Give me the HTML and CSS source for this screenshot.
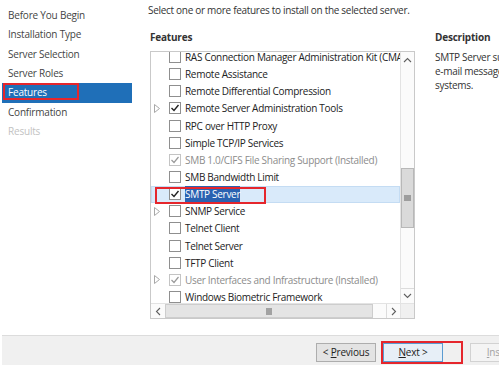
FILE: index.html
```html
<!DOCTYPE html>
<html>
<head>
<meta charset="utf-8">
<link rel="stylesheet" href="styles.css">
</head>
<body>
<div class="page">
  <div class="main">
    <nav class="nav">
      <div class="nav-item">Before You Begin</div>
      <div class="nav-item">Installation Type</div>
      <div class="nav-item">Server Selection</div>
      <div class="nav-item">Server Roles</div>
      <div class="nav-item active">Features<span class="redbox nav-red"></span></div>
      <div class="nav-item">Confirmation</div>
      <div class="nav-item disabled">Results</div>
    </nav>
    <section class="content">
      <div class="intro">Select one or more features to install on the selected server.</div>
      <div class="columns">
        <div class="features-col">
          <div class="col-title">Features</div>
          <div class="listbox">
            <div class="viewport">
              <div class="rows">
                <div class="row"><span class="exp"></span><span class="cb"></span><span class="label">RAS Connection Manager Administration Kit (CMAK)</span></div>
                <div class="row"><span class="exp"></span><span class="cb"></span><span class="label">Remote Assistance</span></div>
                <div class="row"><span class="exp"></span><span class="cb"></span><span class="label">Remote Differential Compression</span></div>
                <div class="row"><span class="exp"><svg width="6" height="9" viewBox="0 0 6 9"><path d="M0.5 0.5 L5.5 4.5 L0.5 8.5 Z" fill="none" stroke="#a8a8a8" stroke-width="1"/></svg></span><span class="cb"><svg class="check" width="10" height="10" viewBox="0 0 10 10"><path d="M1.5 5 L4 7.5 L8.5 2" fill="none" stroke="#222" stroke-width="1.4"/></svg></span><span class="label">Remote Server Administration Tools</span></div>
                <div class="row"><span class="exp"></span><span class="cb"></span><span class="label">RPC over HTTP Proxy</span></div>
                <div class="row"><span class="exp"></span><span class="cb"></span><span class="label">Simple TCP/IP Services</span></div>
                <div class="row installed"><span class="exp"></span><span class="cb"><svg class="check" width="10" height="10" viewBox="0 0 10 10"><path d="M1.5 5 L4 7.5 L8.5 2" fill="none" stroke="#9a9a9a" stroke-width="1.2"/></svg></span><span class="label">SMB 1.0/CIFS File Sharing Support (Installed)</span></div>
                <div class="row"><span class="exp"></span><span class="cb"></span><span class="label">SMB Bandwidth Limit</span></div>
                <div class="row selected"><span class="exp"></span><span class="cb"><svg class="check" width="10" height="10" viewBox="0 0 10 10"><path d="M1.5 5 L4 7.5 L8.5 2" fill="none" stroke="#222" stroke-width="1.4"/></svg></span><span class="label"><span class="sel-text">SMTP Server</span></span><span class="redbox row-red"></span></div>
                <div class="row"><span class="exp"><svg width="6" height="9" viewBox="0 0 6 9"><path d="M0.5 0.5 L5.5 4.5 L0.5 8.5 Z" fill="none" stroke="#a8a8a8" stroke-width="1"/></svg></span><span class="cb"></span><span class="label">SNMP Service</span></div>
                <div class="row"><span class="exp"></span><span class="cb"></span><span class="label">Telnet Client</span></div>
                <div class="row"><span class="exp"></span><span class="cb"></span><span class="label">Telnet Server</span></div>
                <div class="row"><span class="exp"></span><span class="cb"></span><span class="label">TFTP Client</span></div>
                <div class="row installed"><span class="exp"><svg width="6" height="9" viewBox="0 0 6 9"><path d="M0.5 0.5 L5.5 4.5 L0.5 8.5 Z" fill="none" stroke="#a8a8a8" stroke-width="1"/></svg></span><span class="cb"><svg class="check" width="10" height="10" viewBox="0 0 10 10"><path d="M1.5 5 L4 7.5 L8.5 2" fill="none" stroke="#9a9a9a" stroke-width="1.2"/></svg></span><span class="label">User Interfaces and Infrastructure (Installed)</span></div>
                <div class="row"><span class="exp"></span><span class="cb"></span><span class="label">Windows Biometric Framework</span></div>
                <div class="row"><span class="exp"></span><span class="cb"></span><span class="label">Windows Identity Foundation 3.5</span></div>
              </div>
            </div>
            <div class="vscroll">
              <div class="sb-btn"><svg width="9" height="6" viewBox="0 0 9 6"><path d="M1 5 L4.5 1.5 L8 5" fill="none" stroke="#606060" stroke-width="1.1"/></svg></div>
              <div class="vtrack">
                <div class="vthumb"><svg width="7" height="6" viewBox="0 0 7 6"><path d="M0 1 H7 M0 3 H7 M0 5 H7" stroke="#606060" stroke-width="1"/></svg></div>
              </div>
              <div class="sb-btn boxed"><svg width="9" height="6" viewBox="0 0 9 6"><path d="M1 1 L4.5 4.5 L8 1" fill="none" stroke="#606060" stroke-width="1.1"/></svg></div>
            </div>
            <div class="hscroll">
              <div class="sb-btn h"><svg width="6" height="9" viewBox="0 0 6 9"><path d="M5 1 L1.5 4.5 L5 8" fill="none" stroke="#606060" stroke-width="1.1"/></svg></div>
              <div class="hthumb"><svg width="6" height="7" viewBox="0 0 6 7"><path d="M1 0 V7 M3 0 V7 M5 0 V7" stroke="#606060" stroke-width="1"/></svg></div>
              <div class="htrack"></div>
              <div class="sb-btn h boxed-l"><svg width="6" height="9" viewBox="0 0 6 9"><path d="M1 1 L4.5 4.5 L1 8" fill="none" stroke="#606060" stroke-width="1.1"/></svg></div>
            </div>
            <div class="corner"></div>
          </div>
        </div>
        <div class="desc-col">
          <div class="col-title">Description</div>
          <div class="desc-text">SMTP Server supports the transfer of<br>e-mail messages between e-mail<br>systems.</div>
        </div>
      </div>
    </section>
  </div>
  <footer class="footer">
    <button class="btn">&lt; <u>P</u>revious</button>
    <button class="btn default"><u>N</u>ext &gt;<span class="redbox btn-red"></span></button>
    <button class="btn disabled"><u>I</u>nstall</button>
  </footer>
</div>
</body>
</html>
```

FILE: styles.css
```css
* { box-sizing: border-box; }
html, body { margin: 0; padding: 0; }
body {
  width: 499px;
  height: 368px;
  overflow: hidden;
  background: #ffffff;
  font-family: "Open Sans", "Noto Sans", sans-serif;
  font-size: 10px;
  letter-spacing: -0.3px;
  color: #333333;
}
.page {
  display: flex;
  flex-direction: column;
  height: 368px;
  padding-left: 2px;
}
.main {
  display: flex;
  height: 335px;
}
.nav {
  width: 130px;
  padding-top: 6px;
  flex-shrink: 0;
}
.nav-item {
  position: relative;
  height: 19.33px;
  line-height: 19.33px;
  padding-left: 6px;
  color: #444444;
  white-space: nowrap;
  letter-spacing: -0.2px;
}
.nav-item.active {
  background: #1f6fb8;
  color: #ffffff;
}
.nav-item.disabled { color: #c2c2c2; }

.redbox {
  position: absolute;
  border: 2px solid #e5262c;
  pointer-events: none;
}
.nav-red { left: 1px; top: 0px; width: 76px; height: 17px; }

.content {
  flex: 1;
  padding-left: 16px;
  padding-top: 1px;
  min-width: 0;
}
.intro {
  height: 18px;
  line-height: 18px;
  white-space: nowrap;
}
.columns {
  display: flex;
  margin-top: 9px;
}
.features-col {
  width: 265px;
  margin-left: 2px;
  flex-shrink: 0;
}
.col-title {
  height: 18px;
  line-height: 18px;
  font-weight: 700;
  color: #333333;
  letter-spacing: -0.2px;
}
.listbox {
  margin-top: 5px;
  height: 268px;
  border: 1px solid #c9c9c9;
  display: grid;
  grid-template-columns: 1fr 14px;
  grid-template-rows: 1fr 15px;
  background: #ffffff;
}
.viewport {
  overflow: hidden;
  position: relative;
}
.rows { margin-top: -3.6px; }
.row {
  position: relative;
  display: flex;
  align-items: center;
  height: 17.15px;
  white-space: nowrap;
  color: #222222;
}
.exp {
  width: 18px;
  height: 12px;
  display: flex;
  align-items: center;
  justify-content: flex-start;
  padding-left: 3px;
  flex-shrink: 0;
}
.cb {
  width: 12px;
  height: 12px;
  border: 1px solid #8f8f8f;
  background: #ffffff;
  flex-shrink: 0;
  display: flex;
  align-items: center;
  justify-content: center;
}
.row.installed .cb { border-color: #c4c4c4; }
.row.installed { color: #8c8c8c; }
.label {
  padding-left: 4px;
}
.row.selected {
  background: #d9eafa;
  box-shadow: inset 0 0 0 1px #c4dcf3;
}
.sel-text {
  background: #2a62b1;
  color: #ffffff;
  padding: 1px 0;
}
.row-red { left: 4px; top: 1px; width: 111px; height: 17px; }

.vscroll {
  border-left: 1px solid #e3e3e3;
  display: flex;
  flex-direction: column;
  background: #fbfbfb;
}
.sb-btn {
  height: 15px;
  display: flex;
  align-items: center;
  justify-content: center;
  flex-shrink: 0;
}
.sb-btn.boxed { border-top: 1px solid #dcdcdc; }
.vtrack {
  flex: 1;
  padding-top: 101px;
}
.vthumb {
  height: 60px;
  background: #dadada;
  border: 1px solid #b8b8b8;
  display: flex;
  align-items: center;
  justify-content: center;
}
.hscroll {
  border-top: 1px solid #e3e3e3;
  display: flex;
  background: #fbfbfb;
}
.sb-btn.h { width: 14px; height: auto; }
.sb-btn.boxed-l { border-left: 1px solid #dcdcdc; }
.hthumb {
  width: 208px;
  background: #e4e4e4;
  border: 1px solid #cdcdcd;
  display: flex;
  align-items: center;
  justify-content: center;
}
.htrack { flex: 1; }
.corner {
  background: #f0f0f0;
  border-left: 1px solid #e3e3e3;
  border-top: 1px solid #e3e3e3;
}

.desc-col {
  margin-left: 20px;
  white-space: nowrap;
}
.desc-text {
  margin-top: 4px;
  line-height: 14px;
  color: #333333;
}

.footer {
  height: 30px;
  border-top: 1px solid #dcdcdc;
  background: #f0f0f0;
  display: flex;
  align-items: flex-start;
  padding-top: 7px;
  padding-left: 314px;
  gap: 7px;
  overflow: hidden;
}
.btn {
  position: relative;
  width: 60px;
  height: 19px;
  flex-shrink: 0;
  font-family: "Open Sans", "Noto Sans", sans-serif;
  font-size: 10px;
  letter-spacing: -0.2px;
  color: #222222;
  background: #e3e3e3;
  border: 1px solid #adadad;
  padding: 0;
  line-height: 17px;
}
.btn.default {
  background: #e7eff7;
  border-color: #5b9bd1;
}
.btn.disabled {
  margin-left: 20px;
  background: #f4f4f4;
  border-color: #d2d2d2;
  color: #a3a3a3;
}
.btn-red { left: -3px; top: -3px; width: 82px; height: 23px; }
```
